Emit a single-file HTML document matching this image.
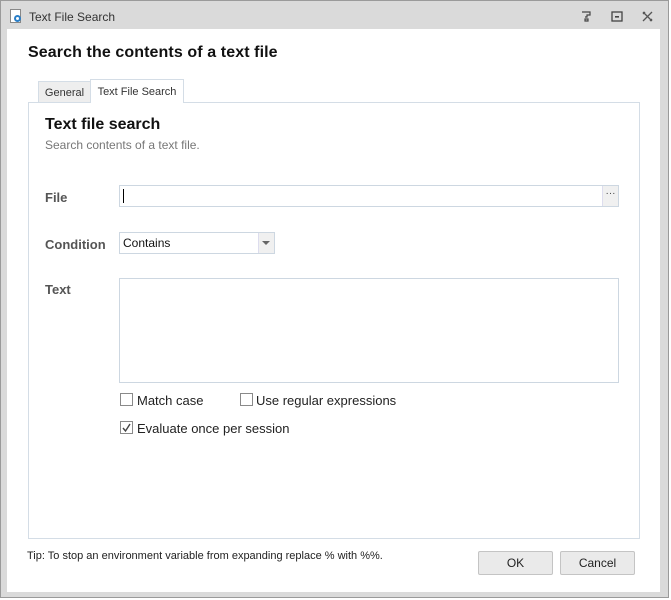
<!DOCTYPE html>
<html><head><style>
*{box-sizing:border-box;margin:0;padding:0}
body{width:671px;height:600px;background:#fff;font-family:"Liberation Sans",sans-serif;position:relative;overflow:hidden}
.a{position:absolute}
.frame{left:0;top:0;width:669px;height:598px;background:#dadada;border:1px solid #9a9a9a}
.client{left:7px;top:29px;width:653px;height:563px;background:#fff}
.lbl{font-size:13px;font-weight:bold;color:#555}
.cb{width:13px;height:13px;border:1px solid #8a8a8a;background:#fff}
.txt{font-size:13px;color:#222}
.btn{border:1px solid #c4c4c4;background:#eaeaea;font-size:12px;color:#222;text-align:center;line-height:22px;border-radius:2px}
</style></head><body>
<div class="a frame"></div>
<div class="a" style="left:10px;top:9px;width:11px;height:14px;border:1px solid #888;background:#fff"></div>
<div class="a" style="left:14px;top:15px;width:7px;height:7px;border:2px solid #2a7fc8;border-radius:50%"></div>
<div class="a" style="left:29px;top:10px;font-size:12px;color:#333">Text File Search</div>
<svg class="a" style="left:580px;top:9px" width="90" height="16" viewBox="0 0 90 16">
<path d="M2 3h8v3h-3v2h-2M5 10h3v2h-3z" fill="none" stroke="#444" stroke-width="1.2"/>
<rect x="32" y="3" width="10" height="9" fill="none" stroke="#444" stroke-width="1.3"/><rect x="35" y="7" width="4" height="1.6" fill="#444"/>
<path d="M63 3l9 9M72 3l-9 9M63 5l2-2M70 12l2-2" fill="none" stroke="#555" stroke-width="1.3"/>
</svg>
<div class="a client"></div>
<div class="a" style="left:28px;top:44px;font-size:16px;font-weight:bold;color:#111;letter-spacing:0.1px">Search the contents of a text file</div>
<div class="a" style="left:38px;top:81px;width:53px;height:22px;background:#eee;border:1px solid #d4dde6;font-size:11px;color:#333;text-align:center;line-height:22px">General</div>
<div class="a" style="left:90px;top:79px;width:94px;height:24px;background:#fff;border:1px solid #d4dde6;border-bottom:none;font-size:11px;color:#333;text-align:center;line-height:24px;z-index:2">Text File Search</div>
<div class="a" style="left:28px;top:102px;width:612px;height:437px;border:1px solid #d4dde6;background:#fff"></div>
<div class="a" style="left:45px;top:116px;font-size:16px;font-weight:bold;color:#111">Text file search</div>
<div class="a" style="left:45px;top:138px;font-size:12px;color:#777">Search contents of a text file.</div>
<div class="a lbl" style="left:45px;top:190px">File</div>
<div class="a" style="left:119px;top:185px;width:500px;height:22px;border:1px solid #cdd7e1;background:#fff"></div>
<div class="a" style="left:123px;top:189px;width:1px;height:14px;background:#000"></div>
<div class="a" style="left:602px;top:186px;width:16px;height:20px;background:#f0f0f0;border-left:1px solid #dde;font-size:10px;text-align:center;line-height:16px;color:#444">···</div>
<div class="a lbl" style="left:45px;top:237px">Condition</div>
<div class="a" style="left:119px;top:232px;width:156px;height:22px;border:1px solid #cdd7e1;background:#fff"></div>
<div class="a" style="left:123px;top:236px;font-size:12px;color:#111">Contains</div>
<div class="a" style="left:258px;top:233px;width:16px;height:20px;background:#f0f0f0;border-left:1px solid #dde"></div>
<div class="a" style="left:262px;top:241px;border-left:4px solid transparent;border-right:4px solid transparent;border-top:4px solid #666"></div>
<div class="a lbl" style="left:45px;top:282px">Text</div>
<div class="a" style="left:119px;top:278px;width:500px;height:105px;border:1px solid #cdd7e1;background:#fff"></div>
<div class="a cb" style="left:120px;top:393px"></div>
<div class="a txt" style="left:137px;top:393px">Match case</div>
<div class="a cb" style="left:240px;top:393px"></div>
<div class="a txt" style="left:256px;top:393px">Use regular expressions</div>
<div class="a cb" style="left:120px;top:421px"></div>
<svg class="a" style="left:121px;top:422px" width="11" height="11"><path d="M2 6l2.5 3L9 2" fill="none" stroke="#444" stroke-width="1.4"/></svg>
<div class="a txt" style="left:137px;top:421px">Evaluate once per session</div>
<div class="a" style="left:27px;top:550px;font-size:11px;color:#222">Tip: To stop an environment variable from expanding replace % with %%.</div>
<div class="a btn" style="left:478px;top:551px;width:75px;height:24px">OK</div>
<div class="a btn" style="left:560px;top:551px;width:75px;height:24px">Cancel</div>
</body></html>
